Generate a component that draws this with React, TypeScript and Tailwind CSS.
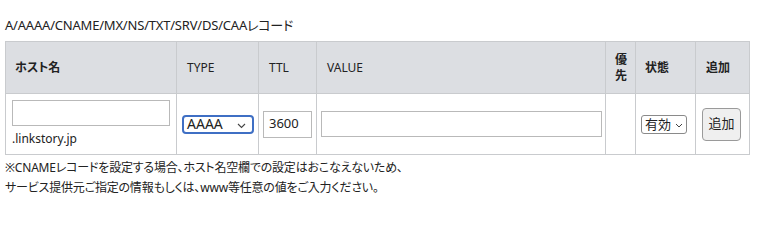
import React from "react";

const font = { fontFamily: '"Noto Sans", "Noto Sans CJK JP", sans-serif' };

const App = () => {
  return (
    <div className="w-[768px] h-[232px] bg-white text-[#222] px-[5px] pt-[16px] [font-feature-settings:'palt']" style={font}>
      <p className="text-[13px] leading-[18px] mb-[7px] tracking-[-0.2px]">A/AAAA/CNAME/MX/NS/TXT/SRV/DS/CAAレコード</p>
      <table className="table-fixed border-collapse w-[744px] text-[12px]">
        <colgroup>
          <col className="w-[171px]" />
          <col className="w-[82px]" />
          <col className="w-[58px]" />
          <col className="w-[289px]" />
          <col className="w-[30px]" />
          <col className="w-[60px]" />
          <col className="w-[54px]" />
        </colgroup>
        <thead>
          <tr className="h-[52px] bg-[#dcdee2] text-left">
            <th className="border border-[#c9cbce] pl-[9px] font-bold">ホスト名</th>
            <th className="border border-[#c9cbce] pl-[10px] font-normal">TYPE</th>
            <th className="border border-[#c9cbce] pl-[10px] font-normal">TTL</th>
            <th className="border border-[#c9cbce] pl-[10px] font-normal">VALUE</th>
            <th className="border border-[#c9cbce] px-[9px] font-bold leading-[16px]">優先</th>
            <th className="border border-[#c9cbce] pl-[9px] font-bold">状態</th>
            <th className="border border-[#c9cbce] pl-[10px] font-bold">追加</th>
          </tr>
        </thead>
        <tbody>
          <tr className="h-[61px]">
            <td className="border border-[#c9cbce] px-[6px] align-top pt-[6px]">
              <input className="block w-[158px] h-[26px] border border-[#b9b9b9] bg-white" />
              <div className="text-[12px] leading-[18px] mt-[4px]">.linkstory.jp</div>
            </td>
            <td className="border border-[#c9cbce] pl-[5px]">
              <div className="relative w-[72px] h-[19px] rounded-[4px] border-2 border-[#3f6fc4] flex items-center pl-[3px] text-[14px] leading-none">
                AAAA
                <svg className="absolute right-[6px] top-[6px]" width="9" height="6" viewBox="0 0 9 6" fill="none" stroke="#444" strokeWidth="1.1">
                  <path d="M1 1l3.5 3.5L8 1" />
                </svg>
              </div>
            </td>
            <td className="border border-[#c9cbce] pl-[4px]">
              <div className="w-[49px] h-[27px] border border-[#b9b9b9] flex items-center pl-[5px] text-[13px]">3600</div>
            </td>
            <td className="border border-[#c9cbce] pl-[4px]">
              <input className="block w-[281px] h-[26px] border border-[#b9b9b9] bg-white" />
            </td>
            <td className="border border-[#c9cbce]"></td>
            <td className="border border-[#c9cbce] pl-[5px]">
              <div className="relative w-[46px] h-[19px] rounded-[3px] border border-[#8a8a8a] flex items-center pl-[3px] text-[13px] leading-none">
                有効
                <svg className="absolute right-[3px] top-[7px]" width="8" height="5" viewBox="0 0 8 5" fill="none" stroke="#444" strokeWidth="1">
                  <path d="M1 1l3 3 3-3" />
                </svg>
              </div>
            </td>
            <td className="border border-[#c9cbce] pl-[6px]">
              <button className="w-[39px] h-[33px] rounded-[4px] border border-[#9a9a9a] bg-[#efefef] text-[13px]">追加</button>
            </td>
          </tr>
        </tbody>
      </table>
      <div className="text-[12px] leading-[20px] mt-[3px] tracking-[-0.2px]">
        <p>※CNAMEレコードを設定する場合、ホスト名空欄での設定はおこなえないため、</p>
        <p>サービス提供元ご指定の情報もしくは、www等任意の値をご入力ください。</p>
      </div>
    </div>
  );
};

export default App;
